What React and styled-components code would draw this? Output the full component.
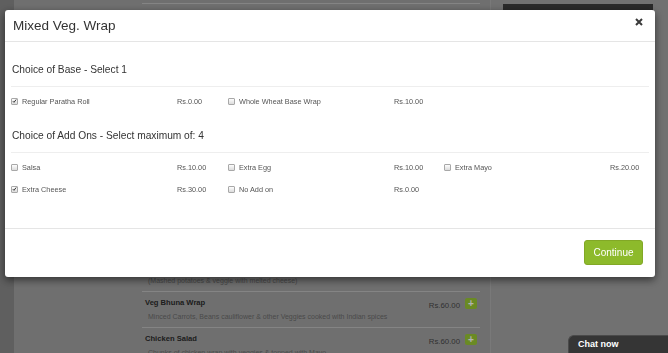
import React from 'react';
import styled, { createGlobalStyle } from 'styled-components';

const GlobalStyle = createGlobalStyle`
  html, body {
    margin: 0;
    padding: 0;
    overflow: hidden;
  }
  body {
    font-family: "Liberation Sans", Arial, sans-serif;
  }
  *, *::before, *::after {
    box-sizing: border-box;
  }
`;

const menu = [
  { name: 'Paneer Tikka Wrap', desc: 'Cottage cheese chunks marinated in tandoori spices', price: 'Rs.70.00' },
  { name: 'Chicken Tikka Wrap', desc: 'Boneless chicken tikka with onions & mint chutney', price: 'Rs.80.00' },
  { name: 'Mixed Veg. Wrap', desc: 'Seasonal veggies tossed in house spices', price: 'Rs.50.00' },
  { name: 'Egg Wrap', desc: 'Double egg omelette rolled with onions & chillies', price: 'Rs.50.00' },
  { name: 'Mutton Seekh Wrap', desc: 'Minced mutton seekh kebab with salad', price: 'Rs.90.00' },
  { name: 'Falafel Wrap', desc: 'Chickpea falafel with hummus & pickled veggies', price: 'Rs.70.00' },
  { name: 'Chilli Paneer Wrap', desc: 'Indo-chinese style paneer with peppers', price: 'Rs.70.00' },
  { name: 'Aloo Cheese Wrap', desc: '(Mashed potatoes & veggie with melted cheese)', price: 'Rs.60.00' },
  { name: 'Veg Bhuna Wrap', desc: 'Minced Carrots, Beans cauliflower & other Veggies cooked with Indian spices', price: 'Rs.60.00' },
  { name: 'Chicken Salad', desc: 'Chunks of chicken wrap with veggies & topped with Mayo', price: 'Rs.60.00' },
];

const groups = [
  {
    title: 'Choice of Base - Select 1',
    options: [
      { label: 'Regular Paratha Roll', price: 'Rs.0.00', checked: true },
      { label: 'Whole Wheat Base Wrap', price: 'Rs.10.00' },
    ],
  },
  {
    title: 'Choice of Add Ons - Select maximum of: 4',
    options: [
      { label: 'Salsa', price: 'Rs.10.00' },
      { label: 'Extra Egg', price: 'Rs.10.00' },
      { label: 'Extra Mayo', price: 'Rs.20.00' },
      { label: 'Extra Cheese', price: 'Rs.30.00', checked: true },
      { label: 'No Add on', price: 'Rs.0.00' },
    ],
  },
];

/* page underneath the modal */
const Page = styled.div`
  display: flex;
  height: 100vh;
  background: #a2a2a2;
`;
const LeftStrip = styled.div`
  width: 14px;
  background: #888888;
`;
const MenuPanel = styled.div`
  width: 477px;
  background: #a0a0a0;
  border-right: 1px solid #aeaeae;
  padding: 3px 10px 0 128px;
`;
const MenuList = styled.ul`
  list-style: none;
  margin: 0;
  padding: 0;
  border-top: 1px solid #bdbdbd;
`;
const MenuItem = styled.li`
  display: flex;
  justify-content: space-between;
  height: 36px;
  padding: 6px 3px 0;
  border-bottom: 1px solid #bdbdbd;
`;
const ItemName = styled.div`
  font-size: 7.6px;
  font-weight: bold;
  line-height: 10px;
  color: #2b2b2b;
`;
const ItemDesc = styled.div`
  font-size: 7px;
  line-height: 10px;
  margin: 4px 0 0 3px;
  color: #6a6a6a;
`;
const ItemBuy = styled.div`
  display: flex;
  align-items: center;
  gap: 5px;
  height: 11px;
`;
const ItemPrice = styled.span`
  font-size: 7.8px;
  color: #474747;
  margin-top: 3px;
`;
const PlusButton = styled.span`
  display: flex;
  align-items: center;
  justify-content: center;
  width: 12px;
  height: 11px;
  border-radius: 2px;
  background: #98c634;
  color: #fff;
  font-size: 10px;
  font-weight: bold;
  line-height: 1;
`;
const Sidebar = styled.div`
  flex: 1;
  padding: 4px 15px 0 12px;
`;
const OrderCard = styled.div`
  height: 120px;
  background: #3c3c3c;
  color: #5a5a5a;
  font-size: 7px;
  font-weight: bold;
  padding: 6px 8px;
`;

/* modal */
const Overlay = styled.div`
  position: fixed;
  inset: 0;
  background: rgba(0, 0, 0, 0.3);
  padding: 10px 0 0 5px;
`;
const Modal = styled.div`
  width: 650px;
  background: #fff;
  border-radius: 3px;
  box-shadow: 0 3px 8px rgba(0, 0, 0, 0.55);
  color: #333;
`;
const Header = styled.div`
  display: flex;
  justify-content: space-between;
  align-items: center;
  height: 32px;
  padding: 0 12px 0 8px;
  border-bottom: 1px solid #e5e5e5;
`;
const Title = styled.h3`
  margin: 0;
  font-size: 13.5px;
  font-weight: normal;
  color: #333;
`;
const CloseButton = styled.button`
  align-self: flex-start;
  margin-top: 8px;
  padding: 0;
  border: 0;
  background: none;
  color: #3a3a3a;
  display: flex;
`;
const Body = styled.div`
  padding: 20px 6px 28px;
`;
const Group = styled.section`
  & + & {
    margin-top: 16px;
  }
`;
const GroupTitle = styled.h4`
  margin: 0;
  font-size: 10.2px;
  line-height: 16px;
  font-weight: normal;
  color: #333;
  padding-left: 1px;
`;
const Divider = styled.hr`
  margin: 8px 0 0;
  border: 0;
  border-top: 1px solid #eeeeee;
`;
const Options = styled.div`
  display: grid;
  grid-template-columns: 217px 216px 1fr;
  grid-auto-rows: 22px;
  padding-top: 3px;
`;
const Option = styled.div`
  display: flex;
  align-items: center;
  font-size: 7.3px;
  color: #555;
`;
const OptionLabel = styled.span`
  width: 155px;
  margin-left: 4px;
`;
const Box = styled.span`
  flex: none;
  width: 7px;
  height: 7px;
  border: 1px solid #a8a8a8;
  border-radius: 1px;
  background: linear-gradient(#fdfdfd, #dcdcdc);
  display: flex;
  align-items: center;
  justify-content: center;
`;
const Footer = styled.div`
  display: flex;
  justify-content: flex-end;
  padding: 11px 12px 12px;
  border-top: 1px solid #e5e5e5;
`;
const ContinueButton = styled.button`
  width: 59px;
  height: 25px;
  border: 1px solid #82a826;
  border-radius: 3px;
  background: #8dba2b;
  color: #fff;
  font-family: "Liberation Sans", Arial, sans-serif;
  font-size: 10px;
  padding: 0;
`;
const ChatTab = styled.div`
  position: fixed;
  right: 0;
  bottom: 0;
  width: 100px;
  height: 18px;
  padding: 3px 0 0 9px;
  background: #353535;
  border: 1px solid #4a4a4a;
  border-right: 0;
  border-bottom: 0;
  border-top-left-radius: 6px;
  color: #fff;
  font-size: 9px;
  font-weight: bold;
`;

const CheckBox = ({ checked }) => (
  <Box>
    {checked && (
      <svg width="6" height="6" viewBox="0 0 6 6">
        <path d="M1 3.2 L2.4 4.6 L5 1.2" stroke="#333" strokeWidth="1.2" fill="none" />
      </svg>
    )}
  </Box>
);

export default function App() {
  return (
    <>
      <GlobalStyle />
      <Page>
        <LeftStrip />
        <MenuPanel>
          <MenuList>
            {menu.map((item, i) => (
              <MenuItem key={i}>
                <div>
                  <ItemName>{item.name}</ItemName>
                  <ItemDesc>{item.desc}</ItemDesc>
                </div>
                <ItemBuy>
                  <ItemPrice>{item.price}</ItemPrice>
                  <PlusButton>+</PlusButton>
                </ItemBuy>
              </MenuItem>
            ))}
          </MenuList>
        </MenuPanel>
        <Sidebar>
          <OrderCard>YOUR ORDER</OrderCard>
        </Sidebar>
      </Page>

      <Overlay>
        <Modal>
          <Header>
            <Title>Mixed Veg. Wrap</Title>
            <CloseButton aria-label="Close">
              <svg width="8" height="8" viewBox="0 0 8 8">
                <path d="M1 1 L7 7 M7 1 L1 7" stroke="currentColor" strokeWidth="2" />
              </svg>
            </CloseButton>
          </Header>
          <Body>
            {groups.map((group, i) => (
              <Group key={i}>
                <GroupTitle>{group.title}</GroupTitle>
                <Divider />
                <Options>
                  {group.options.map((opt, j) => (
                    <Option key={j}>
                      <CheckBox checked={opt.checked} />
                      <OptionLabel>{opt.label}</OptionLabel>
                      <span>{opt.price}</span>
                    </Option>
                  ))}
                </Options>
              </Group>
            ))}
          </Body>
          <Footer>
            <ContinueButton>Continue</ContinueButton>
          </Footer>
        </Modal>
      </Overlay>

      <ChatTab>Chat now</ChatTab>
    </>
  );
}
